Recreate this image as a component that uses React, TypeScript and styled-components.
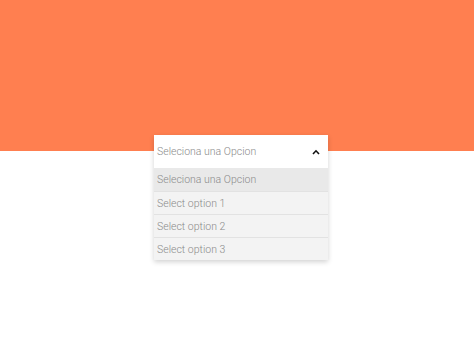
import styled, { createGlobalStyle } from 'styled-components';
import { useState } from 'react';

const GlobalStyle = createGlobalStyle`
  body {
    margin: 0;
    background-color: #ffffff;
    font-family: Roboto, 'Noto Sans', sans-serif;
  }
`;

const options = ['Seleciona una Opcion', 'Select option 1', 'Select option 2', 'Select option 3'];

export default function App() {
  const [selected, setSelected] = useState(0);

  return (
    <Page>
      <GlobalStyle />
      <Banner />
      <Stage>
        <SelectBox>
          <SelectHeader>
            <HeaderLabel>Seleciona una Opcion</HeaderLabel>
            <svg width="8" height="6" viewBox="0 0 8 6">
              <path d="M1 5 L4 1.8 L7 5" fill="none" stroke="#111" strokeWidth="1.6" />
            </svg>
          </SelectHeader>
          <OptionList>
            {options.map((opt, i) => (
              <Option key={opt} active={i === selected} onClick={() => setSelected(i)}>
                {opt}
              </Option>
            ))}
          </OptionList>
        </SelectBox>
      </Stage>
    </Page>
  );
}

const Page = styled.div`
  position: relative;
  width: 474px;
  height: 345px;
  overflow: hidden;
`;

const Banner = styled.div`
  height: 151px;
  background-color: #ff7f50;
`;

const Stage = styled.div`
  position: absolute;
  top: 135px;
  left: 0;
  right: 0;
  display: flex;
  justify-content: center;
`;

const SelectBox = styled.div`
  width: 174px;
  margin-left: 8px;
  background-color: #ffffff;
  box-shadow: 0 2px 5px rgba(0, 0, 0, 0.18);
`;

const SelectHeader = styled.div`
  height: 33px;
  display: flex;
  align-items: center;
  justify-content: space-between;
  padding: 0 8px 0 3px;
  background-color: #ffffff;
`;

const HeaderLabel = styled.span`
  font-size: 10.5px;
  font-weight: 300;
  color: #8a8a8a;
`;

const OptionList = styled.div`
  display: flex;
  flex-direction: column;
`;

const Option = styled.div<{ active?: boolean }>`
  height: 23px;
  box-sizing: border-box;
  display: flex;
  align-items: center;
  padding-left: 3px;
  font-size: 10.5px;
  font-weight: 300;
  color: #8a8a8a;
  background-color: ${({ active }) => (active ? '#e9e9e9' : '#f3f3f3')};
  border-top: ${({ active }) => (active ? 'none' : '1px solid #e2e2e2')};
  cursor: pointer;
`;
